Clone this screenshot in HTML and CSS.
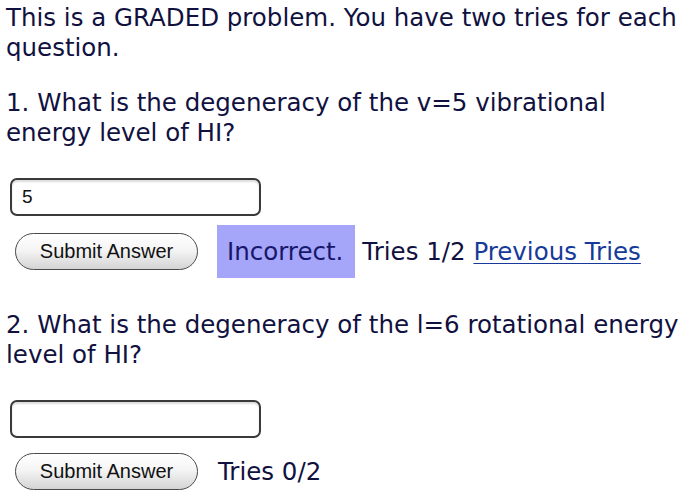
FILE: index.html
```html
<!DOCTYPE html>
<html>
<head>
<meta charset="utf-8">
<link rel="stylesheet" href="styles.css">
</head>
<body>
<div class="page">
  <p class="intro">This is a GRADED problem. You have two tries for each question.</p>

  <div class="question">
    <p class="qtext">1. What is the degeneracy of the v=5 vibrational energy level of HI?</p>
    <div class="field"><input class="answer" type="text" value="5"></div>
    <div class="row">
      <button class="submit">Submit Answer</button>
      <span class="incorrect">Incorrect.</span>
      <span class="tries">Tries 1/2 <a href="#" class="prev">Previous Tries</a></span>
    </div>
  </div>

  <div class="question q2">
    <p class="qtext">2. What is the degeneracy of the l=6 rotational energy level of HI?</p>
    <div class="field"><input class="answer" type="text" value=""></div>
    <div class="row">
      <button class="submit">Submit Answer</button>
      <span class="tries">Tries 0/2</span>
    </div>
  </div>
</div>
</body>
</html>
```

FILE: styles.css
```css
html, body {
  margin: 0;
  padding: 0;
  background: #ffffff;
  overflow: hidden;
}

.page {
  padding: 3px 2px 0 6px;
  font-family: "DejaVu Sans", Verdana, sans-serif;
  font-size: 24.5px;
  line-height: 30px;
  color: #11113f;
}

.intro {
  margin: 0 0 25px 0;
}

.qtext {
  margin: 0 -10px 0 0;
}

.field {
  margin-top: 30px;
  padding-left: 4px;
  height: 38px;
}

.answer {
  display: block;
  box-sizing: border-box;
  width: 251px;
  height: 38px;
  border: 2px solid #3a3a3a;
  border-radius: 7px;
  padding: 0 10px;
  font-family: "Liberation Sans", Arial, sans-serif;
  font-size: 19px;
  color: #111;
  background: #fff;
  box-shadow: inset 0 2px 2px rgba(0,0,0,0.14);
  outline: none;
}

.row {
  display: flex;
  align-items: center;
  margin-top: 9px;
  padding-left: 9px;
}

.submit {
  box-sizing: border-box;
  width: 183px;
  height: 37px;
  border: 1.5px solid #4a4a4a;
  border-radius: 19px;
  background: linear-gradient(#ffffff, #f5f5f5 45%, #d4d4d4);
  font-family: "Liberation Sans", Arial, sans-serif;
  font-size: 20px;
  color: #111;
  padding: 0;
}

.incorrect {
  margin-left: 19px;
  background: #a5a5fa;
  color: #17176a;
  padding: 12px 12px 11px 10px;
  line-height: 30px;
}

.tries {
  margin-left: 7px;
}

.q2 .row {
  margin-top: 15px;
}

.q2 .tries {
  margin-left: 20px;
}

.prev {
  color: #173a9a;
  text-decoration: underline;
  text-decoration-thickness: 1px;
  text-underline-offset: 3px;
}

.q2 {
  margin-top: 32px;
}
```
